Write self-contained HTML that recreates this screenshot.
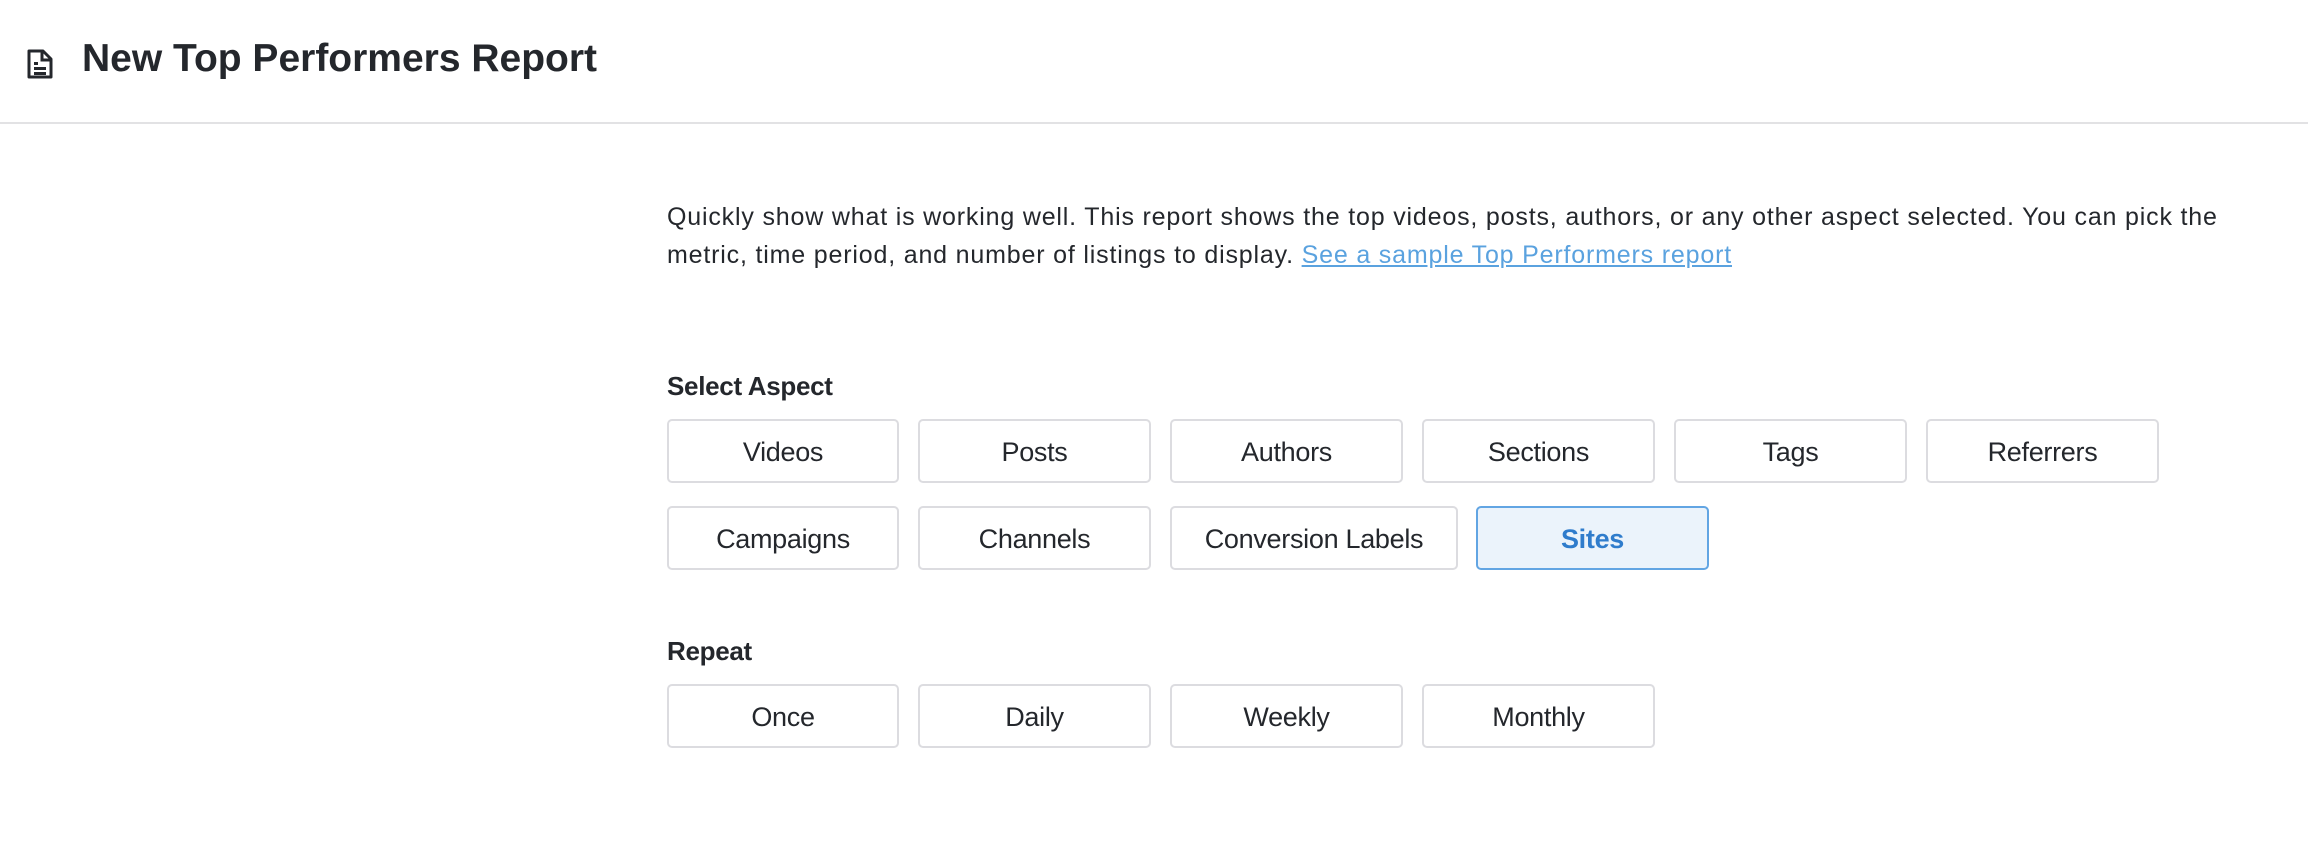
<!DOCTYPE html>
<html><head><meta charset="utf-8"><style>
*{box-sizing:border-box;margin:0;padding:0}
body{width:2308px;height:850px;background:#fff;font-family:"Liberation Sans",sans-serif;color:#24272c;position:relative;overflow:hidden}
.hdr{position:absolute;left:0;top:0;width:2308px;height:124px;border-bottom:2px solid #e2e2e4}
.title{position:absolute;left:82px;top:37px;font-size:39px;font-weight:bold;letter-spacing:0px;white-space:nowrap}
.icon{position:absolute;left:27px;top:49px}
.p{position:absolute;left:667px;top:198px;width:1620px;font-size:25px;line-height:38px;letter-spacing:0.82px;white-space:nowrap}
.p a{color:#5aa2df;text-decoration:underline}
.lbl{position:absolute;left:667px;font-size:26px;font-weight:bold;letter-spacing:-0.3px}
.b{position:absolute;height:64px;border:2px solid #dcdce0;border-radius:5px;display:flex;align-items:center;justify-content:center;font-size:27px;color:#24272c;background:#fff;letter-spacing:-0.3px;padding-top:2px}
.b.s{background:#ebf3fb;border-color:#62a5e3;color:#2f7ccc;font-weight:bold}
</style></head><body>
<div class="hdr">
<svg class="icon" width="26" height="30" viewBox="0 0 26 30"><path d="M2 2h14l8 8v18H2z" fill="none" stroke="#24272c" stroke-width="3" stroke-linejoin="round"/><path d="M15 2v9h9" fill="none" stroke="#24272c" stroke-width="3"/><rect x="7" y="13" width="4" height="3" fill="#24272c"/><rect x="7" y="18" width="12" height="3" fill="#24272c"/><rect x="7" y="23" width="12" height="3" fill="#24272c"/></svg>
<div class="title">New Top Performers Report</div>
</div>
<div class="p">Quickly show what is working well. This report shows the top videos, posts, authors, or any other aspect selected. You can pick the<br>metric, time period, and number of listings to display. <a>See a sample Top Performers report</a></div>
<div class="lbl" style="top:371px">Select Aspect</div>
<div class="b" style="left:667px;top:419px;width:232px">Videos</div>
<div class="b" style="left:918px;top:419px;width:233px">Posts</div>
<div class="b" style="left:1170px;top:419px;width:233px">Authors</div>
<div class="b" style="left:1422px;top:419px;width:233px">Sections</div>
<div class="b" style="left:1674px;top:419px;width:233px">Tags</div>
<div class="b" style="left:1926px;top:419px;width:233px">Referrers</div>
<div class="b" style="left:667px;top:506px;width:232px">Campaigns</div>
<div class="b" style="left:918px;top:506px;width:233px">Channels</div>
<div class="b" style="left:1170px;top:506px;width:288px">Conversion Labels</div>
<div class="b s" style="left:1476px;top:506px;width:233px">Sites</div>
<div class="lbl" style="top:636px">Repeat</div>
<div class="b" style="left:667px;top:684px;width:232px">Once</div>
<div class="b" style="left:918px;top:684px;width:233px">Daily</div>
<div class="b" style="left:1170px;top:684px;width:233px">Weekly</div>
<div class="b" style="left:1422px;top:684px;width:233px">Monthly</div>
</body></html>
